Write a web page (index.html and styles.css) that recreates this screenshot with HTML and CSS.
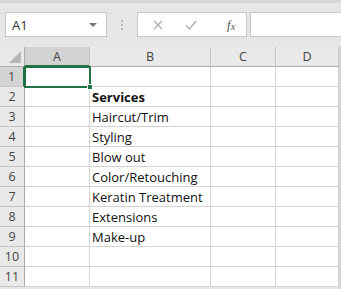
FILE: index.html
```html
<!DOCTYPE html>
<html>
<head>
<meta charset="utf-8">
<link rel="stylesheet" href="styles.css">
</head>
<body>
<div class="app">
  <div class="topstrip"></div>
  <div class="toolbar">
    <div class="namebox"><span class="ref">A1</span><span class="caret"></span></div>
    <div class="dots"><i></i><i></i><i></i></div>
    <div class="fxbox">
      <svg class="ico" width="12" height="12" viewBox="0 0 12 12"><path d="M2 2 L10 10 M10 2 L2 10" stroke="#b0b0b0" stroke-width="1.3" fill="none"/></svg>
      <svg class="ico" width="14" height="12" viewBox="0 0 14 12"><path d="M2 6.5 L5.5 10 L12 2" stroke="#b0b0b0" stroke-width="1.4" fill="none"/></svg>
      <span class="fx">f<sub>x</sub></span>
    </div>
    <div class="formula"></div>
  </div>
  <div class="sheet">
    <div class="grid">
      <div class="hd corner"><span class="tri"></span></div>
      <div class="hd col sel">A</div>
      <div class="hd col">B</div>
      <div class="hd col">C</div>
      <div class="hd col">D</div>

      <div class="hd row sel">1</div><div class="c a1"><span class="handle"></span></div><div class="c"></div><div class="c"></div><div class="c"></div>
      <div class="hd row">2</div><div class="c"></div><div class="c t b">Services</div><div class="c"></div><div class="c"></div>
      <div class="hd row">3</div><div class="c"></div><div class="c t">Haircut/Trim</div><div class="c"></div><div class="c"></div>
      <div class="hd row">4</div><div class="c"></div><div class="c t">Styling</div><div class="c"></div><div class="c"></div>
      <div class="hd row">5</div><div class="c"></div><div class="c t">Blow out</div><div class="c"></div><div class="c"></div>
      <div class="hd row">6</div><div class="c"></div><div class="c t">Color/Retouching</div><div class="c"></div><div class="c"></div>
      <div class="hd row">7</div><div class="c"></div><div class="c t">Keratin Treatment</div><div class="c"></div><div class="c"></div>
      <div class="hd row">8</div><div class="c"></div><div class="c t">Extensions</div><div class="c"></div><div class="c"></div>
      <div class="hd row">9</div><div class="c"></div><div class="c t">Make-up</div><div class="c"></div><div class="c"></div>
      <div class="hd row">10</div><div class="c"></div><div class="c"></div><div class="c"></div><div class="c"></div>
      <div class="hd row">11</div><div class="c"></div><div class="c"></div><div class="c"></div><div class="c"></div>
    </div>
    <div class="vscroll"></div>
  </div>
</div>
</body>
</html>
```

FILE: styles.css
```css
* { box-sizing: border-box; }
html, body { margin: 0; padding: 0; }
body {
  width: 341px;
  height: 289px;
  overflow: hidden;
  background: #e6e6e6;
  font-family: "Open Sans", "Liberation Sans", sans-serif;
}
.app { display: flex; flex-direction: column; height: 289px; }
.topstrip { height: 3px; background: #d6d6d6; }
.toolbar {
  height: 44px;
  display: flex;
  align-items: flex-start;
  padding: 9px 0 0 5px;
  background: #e6e6e6;
}
.namebox {
  width: 102px;
  height: 25px;
  background: #fff;
  border: 1px solid #c8c8c8;
  display: flex;
  align-items: center;
  justify-content: space-between;
  padding: 0 9px 0 6px;
}
.ref { font-family: "Open Sans", sans-serif; font-size: 13px; color: #333; }
.caret {
  width: 0; height: 0;
  border-left: 4px solid transparent;
  border-right: 4px solid transparent;
  border-top: 4px solid #777;
}
.dots {
  width: 30px;
  height: 25px;
  display: flex;
  flex-direction: column;
  align-items: center;
  justify-content: center;
  gap: 2px;
}
.dots i { display: block; width: 2px; height: 2px; background: #b8b8b8; }
.fxbox {
  width: 110px;
  height: 25px;
  background: #fff;
  border: 1px solid #c8c8c8;
  display: flex;
  align-items: center;
  padding: 0 0 0 14px;
}
.fxbox .ico:first-child { margin-right: 20px; }
.fxbox .ico:nth-child(2) { margin-right: 29px; }
.fx {
  font-family: "Liberation Serif", serif;
  font-style: italic;
  font-size: 13px;
  color: #555;
  line-height: 1;
}
.fx sub { font-size: 10px; vertical-align: -1px; }
.formula {
  margin-left: 3px;
  flex: 1;
  height: 25px;
  background: #fff;
  border: 1px solid #c8c8c8;
  border-right: none;
}
.sheet { display: flex; flex: 1; }
.grid {
  display: grid;
  grid-template-columns: 25px 65px 121px 65px 63px;
  grid-template-rows: repeat(12, 20px);
  background: #fff;
  height: 240px;
}
.vscroll { flex: 1; background: #d4d4d4; }
.hd {
  background: #e9e9e9;
  color: #444;
  font-family: "Open Sans", sans-serif;
  font-size: 12.5px;
  display: flex;
  align-items: center;
  justify-content: center;
  border-right: 1px solid #c6c6c6;
  border-bottom: 1px solid #c6c6c6;
}
.hd.col { border-bottom: 1px solid #ababab; }
.hd.row { border-right: 1px solid #ababab; }
.hd.corner { position: relative; border-bottom: 1px solid #ababab; border-right: 1px solid #ababab; }
.tri {
  position: absolute;
  right: 3px;
  bottom: 3px;
  width: 0; height: 0;
  border-left: 12px solid transparent;
  border-bottom: 12px solid #b7b7b7;
}
.hd.col.sel { background: #d3d3d3; border-bottom: 2px solid #217346; color: #444; }
.hd.row.sel { background: #d3d3d3; border-right: 2px solid #217346; color: #444; }
.c {
  border-right: 1px solid #d4d4d4;
  border-bottom: 1px solid #d4d4d4;
  position: relative;
}
.t {
  font-family: "Open Sans", sans-serif;
  font-size: 13px;
  color: #111;
  padding-left: 2px;
  display: flex;
  align-items: flex-end;
  padding-bottom: 0;
  white-space: nowrap;
}
.b { font-weight: bold; }
.a1 { outline: 2px solid #217346; outline-offset: -1px; z-index: 1; }
.handle {
  position: absolute;
  right: -4px;
  bottom: -4px;
  width: 6px; height: 6px;
  background: #217346;
  border: 1px solid #fff;
}
```
